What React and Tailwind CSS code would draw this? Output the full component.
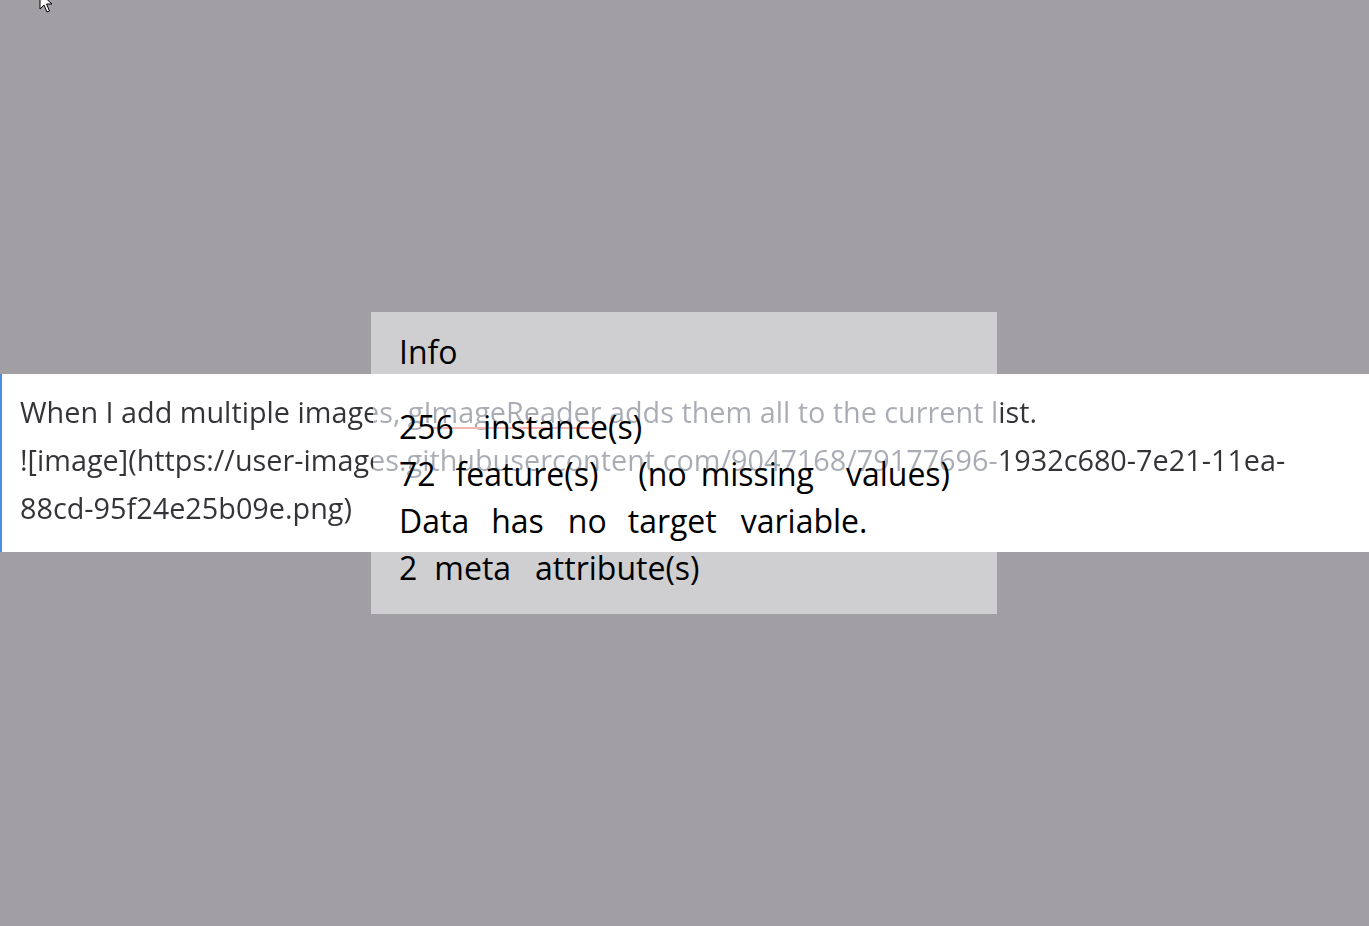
const bandText = [
  'When I add multiple images, gImageReader adds them all to the current list.',
  '![image](https://user-images.githubusercontent.com/9047168/79177696-1932c680-7e21-11ea-',
  '88cd-95f24e25b09e.png)',
]

// each word with the gap that goes before it
const infoLines = [
  [['256', ''], ['instance(s)', 'ml-[29px]']],
  [['72', ''], ['feature(s)', 'ml-[20px]'], ['(no', 'ml-[40px]'], ['missing', 'ml-[14px]'], ['values)', 'ml-[32px]']],
  [['Data', ''], ['has', 'ml-[22px]'], ['no', 'ml-[24px]'], ['target', 'ml-[21px]'], ['variable.', 'ml-[24px]']],
  [['2', ''], ['meta', 'ml-[17px]'], ['attribute(s)', 'ml-[24px]']],
]

const Cursor = () => (
  <svg className="absolute left-[39px] top-[-8px]" width="14" height="22" viewBox="0 0 14 22">
    <path d="M1 1 L1 17 L5 13 L8 20 L10.5 19 L7.5 12 L13 12 Z" fill="#fff" stroke="#000" strokeWidth="1" />
  </svg>
)

const App = () => {
  return (
    <div className="relative h-[926px] w-[1369px] overflow-hidden bg-[#a19fa4] font-['Open_Sans','Liberation_Sans',sans-serif]">
      <Cursor />

      {/* dialog */}
      <div className="pt-[312px] pl-[371px]">
        <div className="h-[302px] w-[626px] bg-[#cfcfd1] pl-[28px] pt-[20px] text-black">
          <div className="relative z-20 text-[32px] leading-[40px]">Info</div>
          <div className="relative z-20 mt-[31px] flex flex-col text-[32px] leading-[47px]">
            {infoLines.map((words, i) => (
              <div key={i} className="flex">
                {words.map(([w, gap], j) => (
                  <span key={j} className={gap}>{w}</span>
                ))}
              </div>
            ))}
          </div>
        </div>
      </div>

      {/* tooltip band */}
      <div className="absolute left-0 top-[374px] z-10 h-[178px] w-full border-l-2 border-[#4a90e2] bg-white">
        <div className="bg-[linear-gradient(to_right,#333338_371px,#a9acb4_371px,#a9acb4_997px,#333338_997px)] bg-clip-text px-[18px] pt-[14px] text-[28.8px] leading-[48px] text-transparent">
          {bandText.map((line, i) => (
            <div key={i} className="whitespace-pre">{line}</div>
          ))}
        </div>
        <div className="absolute left-[430px] top-[53px] h-[2px] w-[160px] bg-[#f2b4b4]" />
      </div>
    </div>
  )
}

export default App
